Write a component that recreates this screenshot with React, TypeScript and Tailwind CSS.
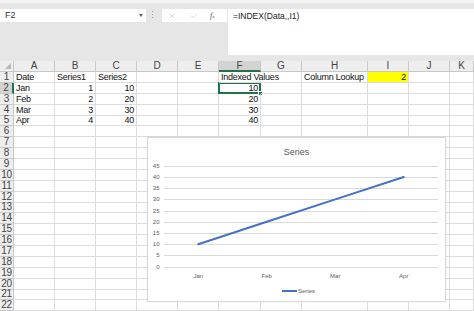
import React from "react";
import clsx from "clsx";
import { X, Check } from "lucide-react";

const COLS = ["A", "B", "C", "D", "E", "F", "G", "H", "I", "J", "K"];
const ROWS = Array.from({ length: 22 }, (_, i) => i + 1);

const DATA: Record<string, string> = {
  A1: "Date", B1: "Series1", C1: "Series2", F1: "Indexed Values", H1: "Column Lookup", I1: "2",
  A2: "Jan", B2: "1", C2: "10", F2: "10",
  A3: "Feb", B3: "2", C3: "20", F3: "20",
  A4: "Mar", B4: "3", C4: "30", F4: "30",
  A5: "Apr", B5: "4", C5: "40", F5: "40",
};

const TICKS = [45, 40, 35, 30, 25, 20, 15, 10, 5, 0];
const MONTHS = ["Jan", "Feb", "Mar", "Apr"];
const yOf = (v: number) => 128.7 - v * 2.244;
const xOf = (i: number) => 16 + 68.5 * (i + 0.5);

function Cell({ col, row }: { col: string; row: number }) {
  const id = `${col}${row}`;
  const v = DATA[id];
  const isNum = v !== undefined && !isNaN(Number(v));
  return (
    <div
      className={clsx(
        "relative flex items-center border-b border-[#dcdcdc] px-[2px] text-[9px] leading-[10px] tracking-[-0.25px] text-[#111] whitespace-nowrap",
        id !== "F1" && "border-r",
        isNum && "justify-end",
        id === "F1" && "z-10 overflow-visible",
        id === "I1" && "bg-[#ffff00]"
      )}
    >
      {v}
      {id === "F2" && (
        <>
          {/* spill range outline */}
          <div className="pointer-events-none absolute left-[-1px] top-[-1px] h-[44.5px] w-[43px] border border-[#6b97d6]" />
          {/* active cell */}
          <div className="pointer-events-none absolute left-[-1px] top-[-1px] bottom-[-1px] right-[-1px] border-2 border-[#217346]" />
          <div className="absolute right-[-3px] bottom-[-3px] h-[5px] w-[5px] border border-white bg-[#217346]" />
        </>
      )}
    </div>
  );
}

function Chart() {
  return (
    <div className="absolute left-[147px] top-[137px] h-[165px] w-[299px] border border-[#d9d9d9] bg-white shadow-[0_0_2px_rgba(0,0,0,0.08)]">
      <div className="mt-[8px] text-center text-[9px] leading-[12px] text-[#595959]">Series</div>
      <svg className="absolute left-0 top-0" width="297" height="163" viewBox="0 0 297 163">
        {TICKS.map((t) => (
          <g key={t}>
            <line x1="16" x2="290" y1={Math.round(yOf(t)) + 0.5} y2={Math.round(yOf(t)) + 0.5} stroke="#d9d9d9" strokeWidth="1" />
            <text x="11.5" y={yOf(t) + 2} textAnchor="end" fontSize="6" fill="#595959">
              {t}
            </text>
          </g>
        ))}
        {MONTHS.map((m, i) => (
          <text key={m} x={xOf(i)} y="139.7" textAnchor="middle" fontSize="6" fill="#595959">
            {m}
          </text>
        ))}
        <polyline
          points={[10, 20, 30, 40].map((v, i) => `${xOf(i)},${yOf(v)}`).join(" ")}
          fill="none"
          stroke="#4472c4"
          strokeWidth="2"
          strokeLinecap="round"
        />
        <line x1="134" x2="149" y1="153" y2="153" stroke="#4472c4" strokeWidth="2" />
        <text x="150" y="155" fontSize="6" fill="#595959">
          Series
        </text>
      </svg>
    </div>
  );
}

export default function App() {
  return (
    <div className="relative h-[311px] w-[474px] overflow-hidden bg-white font-['Liberation_Sans',Arial,sans-serif]">
      {/* top strip */}
      <div className="h-[3px] bg-[#f3f3f3]" />

      {/* formula bar */}
      <div className="flex h-[58px] items-start bg-[#e6e6e6] pt-[6px]">
        <div className="flex h-[13px] w-[146px] items-center justify-between bg-white pl-[5px] pr-[3px] text-[9px] text-[#333]">
          <span>F2</span>
          <span className="h-0 w-0 border-x-[2px] border-t-[3px] border-x-transparent border-t-[#666]" />
        </div>
        <div className="ml-[6px] mt-[2px] flex flex-col gap-[2px]">
          <span className="h-[1px] w-[1px] bg-[#9a9a9a]" />
          <span className="h-[1px] w-[1px] bg-[#9a9a9a]" />
          <span className="h-[1px] w-[1px] bg-[#9a9a9a]" />
        </div>
        <div className="ml-[9px] flex h-[13px] w-[65px] items-center bg-white">
          <X className="ml-[6px] text-[#b5b5b5]" size={8} strokeWidth={1.5} />
          <Check className="ml-[14px] text-[#b5b5b5]" size={8} strokeWidth={1.5} />
          <span className="ml-[12px] font-['Liberation_Serif',serif] text-[8px] italic leading-none text-[#555]">
            f<span className="text-[5px]">x</span>
          </span>
        </div>
        <div className="ml-[1px] h-[46px] flex-1 bg-white pl-[5px] pt-[1px] text-[8.5px] leading-[12px] text-[#222]">
          =INDEX(Data,,I1)
        </div>
      </div>

      {/* sheet grid */}
      <div className="grid grid-cols-[14px_41px_41px_41px_41px_41px_42px_41px_66px_41px_41px_1fr] grid-rows-[11px_repeat(22,10.875px)]">
        <div className="relative border-b border-r border-[#c8c8c8] bg-[#eeeeee]">
          <span className="absolute bottom-[2px] right-[2px] h-0 w-0 border-b-[6px] border-l-[6px] border-b-[#b9b9b9] border-l-transparent" />
        </div>
        {COLS.map((c) => (
          <div
            key={c}
            className={clsx(
              "flex items-center justify-center border-r border-[#c8c8c8] text-[10px] leading-none text-[#444]",
              c === "F" ? "border-b-2 border-b-[#217346] bg-[#d3d3d3]" : "border-b bg-[#eeeeee]"
            )}
          >
            {c}
          </div>
        ))}
        {ROWS.map((r) => (
          <React.Fragment key={r}>
            <div
              className={clsx(
                "flex items-center justify-center border-b border-[#c8c8c8] text-[10px] leading-none tracking-[-0.3px] text-[#444]",
                r === 2 ? "border-r-2 border-r-[#217346] bg-[#d3d3d3]" : "border-r bg-[#eeeeee]"
              )}
            >
              {r}
            </div>
            {COLS.map((c) => (
              <Cell key={c} col={c} row={r} />
            ))}
          </React.Fragment>
        ))}
      </div>

      <Chart />
    </div>
  );
}
